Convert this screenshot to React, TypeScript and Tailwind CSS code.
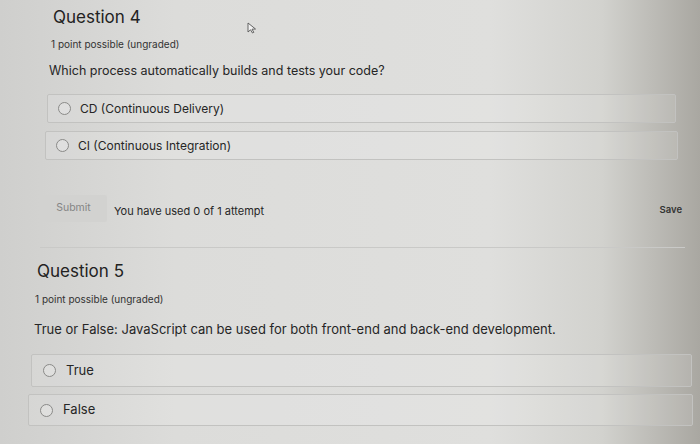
import React from "react";

type Option = { label: string };

function Radio() {
  return <span className="block h-[13px] w-[13px] shrink-0 rounded-full border border-[#8a8a88] bg-white/20" />;
}

function OptionRow({ label, className }: Option & { className: string }) {
  return (
    <div className={`flex items-center rounded-[2px] border border-[#c2c2c0] bg-white/10 ${className}`}>
      <Radio />
      <span className="text-[#262626]">{label}</span>
    </div>
  );
}

function Cursor() {
  return (
    <svg className="absolute left-[247px] top-[22px]" width="10" height="12" viewBox="0 0 10 12">
      <path d="M1 1 L1 10 L3.5 7.8 L5.5 11 L6.8 10.3 L5 7.2 L8.5 7 Z" fill="#f2f2f2" stroke="#555" strokeWidth="0.9" strokeLinejoin="round" />
    </svg>
  );
}

export default function App() {
  return (
    <div
      className="relative h-[444px] w-[700px] overflow-hidden bg-[linear-gradient(to_right,#cfcfcd_0%,#dcdcda_25%,#dfdfdd_70%,#d2d2ce_86%,#a9a7a1_100%)] text-[#2a2a2a]"
      style={{ fontFamily: "Inter, 'Noto Sans', sans-serif" }}
    >
      <Cursor />

      {/* Question 4 */}
      <section className="pl-[47px] pr-[22px] pt-[6px]">
        <h2 className="pl-[6px] text-[17px] leading-[22px] text-[#222]">Question 4</h2>
        <p className="mt-[9px] pl-[4px] text-[10px] leading-[14px] text-[#333]">1 point possible (ungraded)</p>
        <p className="mt-[12px] pl-[2px] text-[12.5px] leading-[16px] text-[#262626]">
          Which process automatically builds and tests your code?
        </p>
        <div className="mt-[15px] flex flex-col gap-[8px] text-[12px]">
          <OptionRow label="CD (Continuous Delivery)" className="ml-0 mr-[2px] h-[29px] gap-[9px] pl-[10px]" />
          <OptionRow label="CI (Continuous Integration)" className="-ml-[2px] mr-0 h-[29px] gap-[9px] pl-[10px]" />
        </div>
      </section>

      {/* Submit row */}
      <div className="mt-[35px] flex items-center pl-[40px] pr-[18px]">
        <button className="h-[27px] w-[67px] rounded-[2px] bg-[#d2d2d0] pb-[1px] text-[10.5px] text-[#858585]">Submit</button>
        <span className="ml-[7px] mt-[6px] text-[11px] text-[#262626]">You have used 0 of 1 attempt</span>
        <span className="ml-auto mt-[4px] text-[9.5px] font-semibold text-[#333]">Save</span>
      </div>

      <div className="ml-[40px] mr-[15px] mt-[25px] border-t border-[#c9c9c7]" />

      {/* Question 5 */}
      <section className="pl-[28px] pr-[7px] pt-[12px]">
        <h2 className="pl-[9px] text-[17px] leading-[22px] text-[#222]">Question 5</h2>
        <p className="mt-[10px] pl-[7px] text-[10px] leading-[14px] text-[#333]">1 point possible (ungraded)</p>
        <p className="mt-[15px] pl-[6px] text-[13px] leading-[17px] text-[#262626]">
          True or False: JavaScript can be used for both front-end and back-end development.
        </p>
        <div className="mt-[16px] flex flex-col gap-[7px] text-[13px]">
          <OptionRow label="True" className="ml-[3px] mr-[1px] h-[33px] gap-[10px] pl-[11px]" />
          <OptionRow label="False" className="h-[32px] gap-[10px] pl-[11px]" />
        </div>
      </section>
    </div>
  );
}
